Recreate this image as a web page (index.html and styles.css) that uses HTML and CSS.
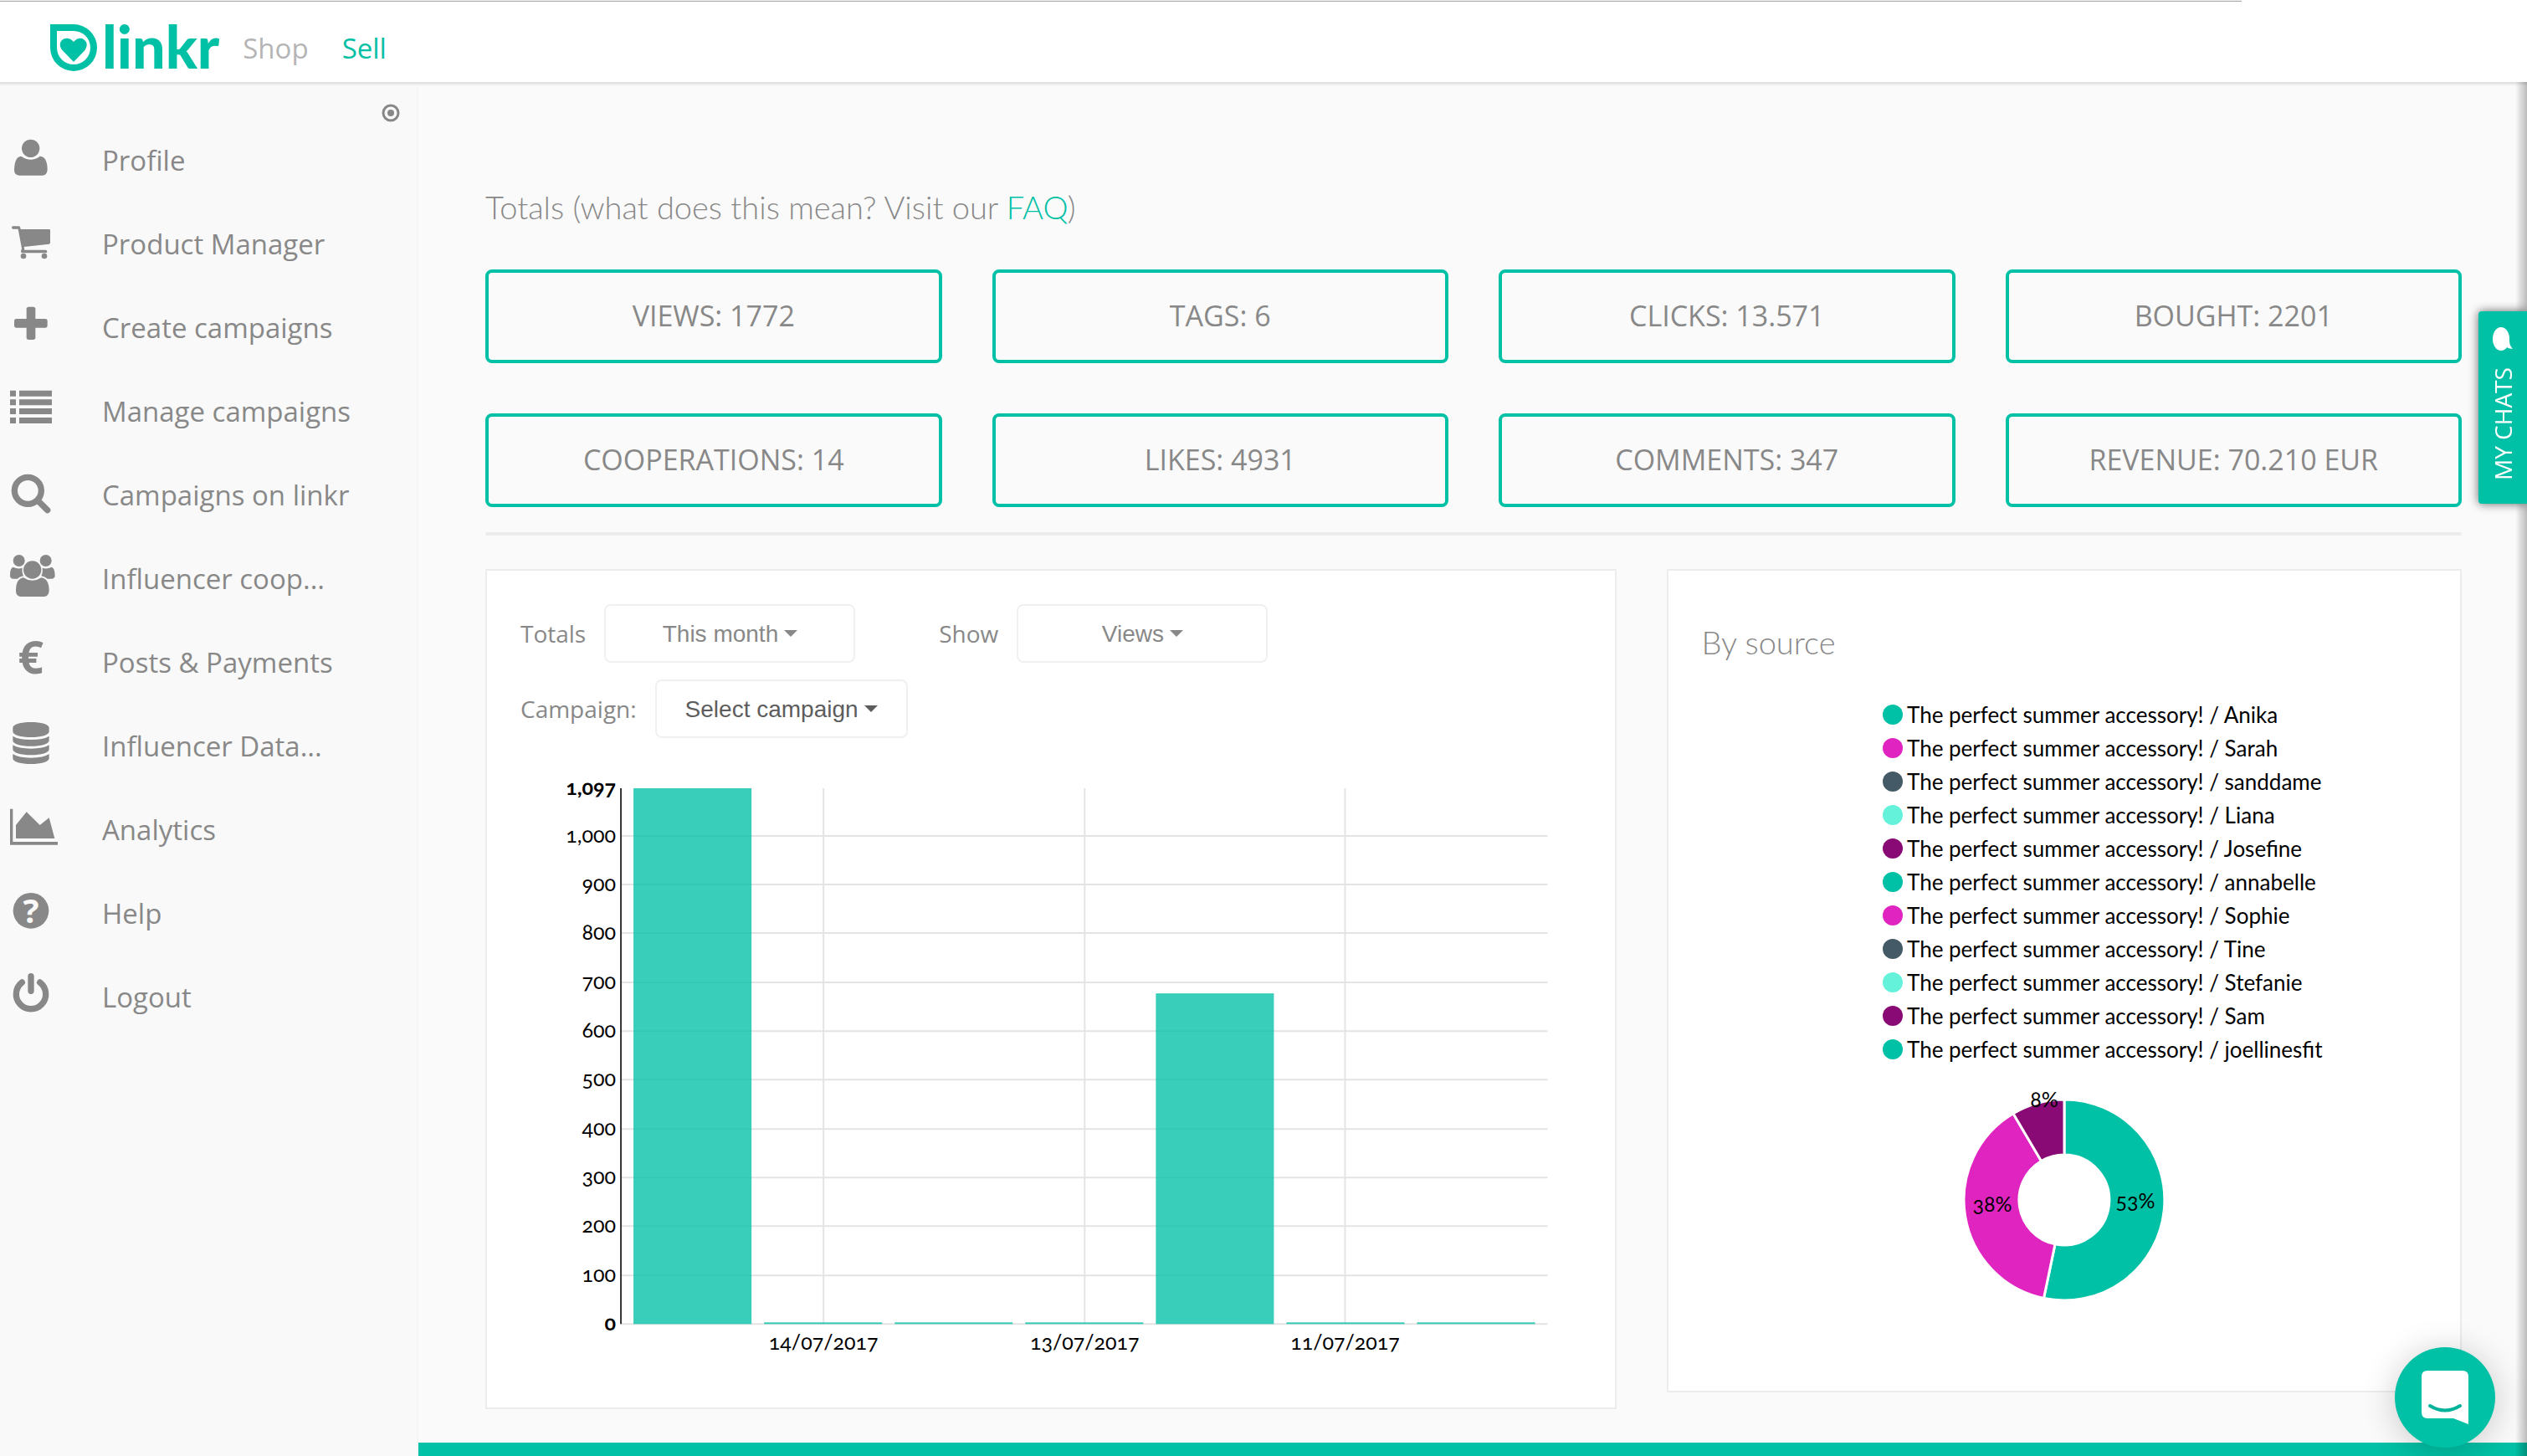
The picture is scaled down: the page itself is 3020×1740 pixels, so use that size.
FILE: index.html
```html
<!DOCTYPE html>
<html lang="en">

<head>
    <meta charset="UTF-8">
    <meta name="viewport" content="width=device-width, initial-scale=1.0">
    <title>linkr - Analytics</title>
    <link rel="stylesheet" href="styles.css">
</head>

<body>
    <div class="loading-bar"></div>

    <header class="header">
        <a class="logo" href="#">
            <svg class="logo-mark" viewBox="0 0 56 56" aria-hidden="true">
                <path fill="#00c0a5" fill-rule="evenodd" d="M0 0H28A28 28 0 1 1 0 28zM8 8V28A20 20 0 1 0 28 8z" />
                <path fill="#00c0a5" d="M28 45L14.500 31C11 27 11 22 14 19C18 15.500 24 16 28 21C32 16 38 15.500 41 19C45 22 44 27 41.500 31z" />
            </svg>
            <span class="logo-text">linkr</span>
        </a>
        <nav class="top-nav">
            <a href="#">Shop</a>
            <a href="#" class="active">Sell</a>
        </nav>
    </header>

    <div class="layout">
        <aside class="sidebar">
            <button class="toggle" type="button" aria-label="Toggle menu">
                <svg viewBox="0 0 22 22" width="22" height="22">
                    <circle cx="11" cy="11" r="9" fill="none" stroke="#888" stroke-width="3" />
                    <circle cx="11" cy="11" r="4" fill="#888" />
                </svg>
            </button>

            <ul class="menu">
                <li><a href="#">
                    <svg viewBox="0 0 180 204"><circle cx="80" cy="58" r="32" /><path d="M46 86Q80 110 114 86Q140 88 140 135Q138 155 122 155H39Q21 154 21 135Q22 88 46 86z" /></svg>
                    <span>Profile</span></a></li>
                <li><a href="#">
                    <svg viewBox="0 0 180 204"><path d="M16 37H38Q42 37 43 42L44 48H146Q150 48 150 52V96Q150 100 146 101L56 111L58 122H135Q139 123 139 128Q139 133 135 133H49Q44 132 45 126L48 117L35 47H16Q12 46 12 42Q12 37 16 37z" /><circle cx="54" cy="144" r="10" /><circle cx="129" cy="144" r="10" /></svg>
                    <span>Product Manager</span></a></li>
                <li><a href="#">
                    <svg viewBox="0 0 180 204"><rect x="65" y="26" width="32" height="118" rx="8" /><rect x="21" y="69" width="119" height="32" rx="8" /></svg>
                    <span>Create campaigns</span></a></li>
                <li><a href="#">
                    <svg viewBox="0 0 180 204"><path d="M6 26h21v21H6zM39 26h117v21H39zM6 58h21v21H6zM39 58h117v21H39zM6 90h21v21H6zM39 90h117v21H39zM6 123h21v21H6zM39 123h117v21H39z" /></svg>
                    <span>Manage campaigns</span></a></li>
                <li><a href="#">
                    <svg viewBox="0 0 180 204"><circle class="line" cx="70" cy="85" r="48" /><path class="line" d="M106 121L140 155" /></svg>
                    <span>Campaigns on linkr</span></a></li>
                <li><a href="#">
                    <svg viewBox="0 0 180 204"><circle cx="38" cy="36" r="21" /><circle cx="134" cy="36" r="21" /><circle cx="86" cy="69" r="32" /><path d="M17 59Q34 68 50 62Q48 80 54 91Q40 93 32 101H18Q6 100 6 89Q6 62 17 59zM155 59Q138 68 122 62Q124 80 118 91Q132 93 140 101H154Q167 100 167 89Q166 62 155 59zM54 97Q86 118 118 97Q146 100 146 145Q144 165 128 165H45Q27 164 27 145Q27 100 54 97z" /></svg>
                    <span>Influencer coop...</span></a></li>
                <li><a href="#">
                    <svg viewBox="0 0 180 204"><text x="80" y="142" font-size="160">€</text></svg>
                    <span>Posts &amp; Payments</span></a></li>
                <li><a href="#">
                    <svg viewBox="0 0 180 204"><path d="M16 36C16 22 45 15 81 15S146 22 146 36V48C146 62 117 69 81 69S16 62 16 48zM16 65Q36 78 81 78T146 65V80C146 94 117 101 81 101S16 94 16 80zM16 97Q36 110 81 110T146 97V112C146 126 117 133 81 133S16 126 16 112zM16 129Q36 143 81 143T146 129V144C146 158 117 165 81 165S16 158 16 144z" /></svg>
                    <span>Influencer Data...</span></a></li>
                <li><a href="#">
                    <svg viewBox="0 0 180 204"><path d="M6 26H16V144H177V155H6zM27 84L65 37L113 84L146 58L166 132H27z" /></svg>
                    <span>Analytics</span></a></li>
                <li><a href="#">
                    <svg viewBox="0 0 180 204"><circle cx="81" cy="91" r="64" /><text class="knockout" x="81" y="134" font-size="120">?</text></svg>
                    <span>Help</span></a></li>
                <li><a href="#">
                    <svg viewBox="0 0 180 204"><path class="line" d="M49 48A53 53 0 1 0 113 48M81 26V79" /></svg>
                    <span>Logout</span></a></li>
            </ul>
        </aside>

        <main class="main">
            <div class="content">
                <h1>Totals (what does this mean? Visit our <a href="#">FAQ</a>)</h1>

                <div class="stats">
                    <div class="stat">VIEWS: 1772</div>
                    <div class="stat">TAGS: 6</div>
                    <div class="stat">CLICKS: 13.571</div>
                    <div class="stat">BOUGHT: 2201</div>
                    <div class="stat">COOPERATIONS: 14</div>
                    <div class="stat">LIKES: 4931</div>
                    <div class="stat">COMMENTS: 347</div>
                    <div class="stat">REVENUE: 70.210 EUR</div>
                </div>

                <hr>

                <div class="panels">
                    <section class="panel chart-panel">
                        <div class="filters">
                            <div class="filter">
                                <label for="period">Totals</label>
                                <div class="select">
                                    <select id="period"><option>This month</option></select>
                                </div>
                            </div>
                            <div class="filter">
                                <label for="metric">Show</label>
                                <div class="select">
                                    <select id="metric"><option>Views</option></select>
                                </div>
                            </div>
                        </div>
                        <div class="filters">
                            <div class="filter">
                                <label for="campaign">Campaign:</label>
                                <div class="select select-campaign">
                                    <select id="campaign"><option>Select campaign</option></select>
                                </div>
                            </div>
                        </div>

                        <svg class="bar-chart" viewBox="0 0 1267 740" role="img" aria-label="Views per day">
                            <!-- grid -->
                            <path class="grid" d="M120 97H1227M120 155H1227M120 213H1227M120 272H1227M120 330H1227M120 388H1227M120 447H1227M120 505H1227M120 563H1227M120 622H1227M120 680H1227M362 40V680M674 40V680M985 40V680" />
                            <!-- bars -->
                            <g class="bars">
                                <rect x="135" y="40" width="141" height="640" />
                                <rect x="291" y="678" width="141" height="2" />
                                <rect x="447" y="678" width="141" height="2" />
                                <rect x="603" y="678" width="141" height="2" />
                                <rect x="759" y="285" width="141" height="395" />
                                <rect x="915" y="678" width="141" height="2" />
                                <rect x="1071" y="678" width="141" height="2" />
                            </g>
                            <path class="axis" d="M120 40V680" />
                            <g class="y-labels">
                                <text class="bold" x="114" y="48">1,097</text>
                                <text x="114" y="105">1,000</text>
                                <text x="114" y="163">900</text>
                                <text x="114" y="221">800</text>
                                <text x="114" y="280">700</text>
                                <text x="114" y="338">600</text>
                                <text x="114" y="396">500</text>
                                <text x="114" y="455">400</text>
                                <text x="114" y="513">300</text>
                                <text x="114" y="571">200</text>
                                <text x="114" y="630">100</text>
                                <text class="bold" x="114" y="688">0</text>
                            </g>
                            <g class="x-labels">
                                <text x="362" y="711">14/07/2017</text>
                                <text x="674" y="711">13/07/2017</text>
                                <text x="985" y="711">11/07/2017</text>
                            </g>
                        </svg>
                    </section>

                    <section class="panel source-panel">
                        <h2>By source</h2>
                        <ul class="legend">
                            <li class="teal">The perfect summer accessory! / Anika</li>
                            <li class="pink">The perfect summer accessory! / Sarah</li>
                            <li class="slate">The perfect summer accessory! / sanddame</li>
                            <li class="mint">The perfect summer accessory! / Liana</li>
                            <li class="purple">The perfect summer accessory! / Josefine</li>
                            <li class="teal">The perfect summer accessory! / annabelle</li>
                            <li class="pink">The perfect summer accessory! / Sophie</li>
                            <li class="slate">The perfect summer accessory! / Tine</li>
                            <li class="mint">The perfect summer accessory! / Stefanie</li>
                            <li class="purple">The perfect summer accessory! / Sam</li>
                            <li class="teal">The perfect summer accessory! / joellinesfit</li>
                        </ul>
                        <svg class="donut" viewBox="0 0 260 260" width="260" height="260" role="img" aria-label="Views by source">
                            <g stroke="#fff" stroke-width="3">
                                <path fill="#00c0a5" d="M130 10A120 120 0 1 1 105.500 247.500L119 182.900A54 54 0 1 0 130 76z" />
                                <path fill="#e024c0" d="M105.500 247.500A120 120 0 0 1 69 26.700L102.500 83.500A54 54 0 0 0 119 182.900z" />
                                <path fill="#890a74" d="M69 26.700A120 120 0 0 1 130 10V76A54 54 0 0 0 102.500 83.500z" />
                            </g>
                            <text x="215" y="140">53%</text>
                            <text x="44" y="144">38%</text>
                            <text x="106" y="19">8%</text>
                        </svg>
                    </section>
                </div>
            </div>
            <footer class="footer"></footer>
        </main>
    </div>

    <div class="drawer-edge"></div>
    <button class="chats" type="button">
        MY CHATS
        <svg viewBox="0 0 24 28" width="24" height="28" aria-hidden="true">
            <ellipse cx="14" cy="14" rx="10" ry="14" fill="#fff" />
            <path fill="#fff" d="M4 12Q4 6 0 2Q5 2 9 5z" />
        </svg>
    </button>

    <button class="messenger" type="button" aria-label="Open messenger">
        <svg viewBox="0 0 56 64" width="56" height="64">
            <path fill="#fff" d="M7 0H49Q56 0 56 7V64L38 57H7Q0 57 0 50V7Q0 0 7 0z" />
            <path fill="none" stroke="#00b39a" stroke-width="4" stroke-linecap="round" d="M10 42Q28 53 46 42" />
        </svg>
    </button>
</body>

</html>
```
FILE: styles.css
```css
* {
    box-sizing: border-box;
}

body {
    margin: 0;
    font-family: "Open Sans", sans-serif;
    color: #888;
    background-color: #fafafa;
}

a {
    color: #00c0a5;
    text-decoration: none;
}

button,
select {
    font-family: inherit;
    border: none;
    cursor: pointer;
}

ul {
    list-style: none;
    margin: 0;
    padding: 0;
}

/* header */
.loading-bar {
    position: absolute;
    top: 0;
    left: 0;
    width: 2679px;
    max-width: 100%;
    height: 2px;
    background-color: #f0f0f0;
    border-bottom: 1px solid #aaa;
}

.header {
    display: flex;
    align-items: center;
    height: 102px;
    padding: 14px 60px 0;
    background-color: #fff;
    border-bottom: 2px solid #eee;
    box-shadow: inset 0 -2px 0 #e1e1e1;
}

.logo {
    display: flex;
    align-items: center;
    gap: 6px;
}

.logo-mark {
    width: 56px;
    height: 56px;
}

.logo-text {
    font-family: "Lato", sans-serif;
    font-weight: 900;
    font-size: 70px;
    line-height: 52px;
    padding-bottom: 4px;
}

.top-nav {
    display: flex;
    gap: 40px;
    margin-left: 28px;
    font-size: 33px;
}

.top-nav a {
    color: #b5b5b5;
}

.top-nav .active {
    color: #00c0a5;
}

/* layout */
.layout {
    display: grid;
    grid-template-columns: 500px 1fr;
    min-height: calc(100vh - 102px);
}

.sidebar {
    background-color: #f9f9f9;
    border-right: 2px solid #f5f5f5;
}

.toggle {
    display: flex;
    align-items: center;
    height: 66px;
    margin: 0 10px -26px auto;
    padding: 0 10px;
    background: none;
}

.menu a {
    display: flex;
    align-items: center;
    gap: 52px;
    height: 100px;
    padding-left: 10px;
    font-size: 33px;
    color: #888;
}

.menu svg {
    width: 60px;
    height: 68px;
    overflow: visible;
    fill: #888;
}

.menu span {
    padding-bottom: 2px;
}

.menu .line {
    fill: none;
    stroke: #888;
    stroke-width: 22;
    stroke-linecap: round;
}

.menu text {
    font-weight: 700;
    text-anchor: middle;
}

.menu .knockout {
    fill: #f9f9f9;
}

.main {
    display: flex;
    flex-direction: column;
}

.content {
    flex: 1;
    padding: 120px 78px 40px 80px;
}

h1,
h2 {
    margin: 0;
    font-family: "Lato", sans-serif;
    font-weight: 300;
    font-size: 38px;
    line-height: 50px;
}

.stats {
    display: grid;
    grid-template-columns: repeat(4, 1fr);
    gap: 60px;
    margin-top: 50px;
}

.stat {
    height: 112px;
    border: 4px solid #00c0a5;
    border-radius: 8px;
    font-size: 34px;
    line-height: 102px;
    text-align: center;
}

hr {
    height: 4px;
    margin: 30px 0 40px;
    border: none;
    border-radius: 2px;
    background-color: #ececec;
}

.panels {
    display: grid;
    grid-template-columns: 1351fr 950fr;
    align-items: start;
    gap: 60px;
}

.panel {
    background-color: #fff;
    border: 2px solid #ececec;
    padding: 40px;
}

/* filters */
.filters {
    display: flex;
    gap: 100px;
    margin-bottom: 20px;
    font-size: 28px;
}

.filter {
    display: flex;
    align-items: center;
    gap: 22px;
}

.select {
    display: flex;
    align-items: center;
    justify-content: center;
    gap: 6px;
    width: 300px;
    height: 70px;
    border: 2px solid #f0f0f0;
    border-radius: 8px;
}

.select::after {
    content: "";
    border: 8px solid transparent;
    border-top-color: #888;
    border-bottom: none;
}

.select select {
    appearance: none;
    padding: 0;
    background: none;
    font-family: "Liberation Sans", Arial, sans-serif;
    font-size: 28px;
    color: #888;
}

.select-campaign {
    width: auto;
    padding: 0 34px;
}

.select-campaign select {
    color: #5d5d5d;
}

.select-campaign::after {
    border-top-color: #5d5d5d;
}

/* charts */
.bar-chart {
    display: block;
    width: 100%;
}

.bar-chart text,
.donut text {
    font-family: "Lato", sans-serif;
    font-size: 25px;
    font-variant-numeric: oldstyle-nums;
    fill: #000;
}

.grid,
.axis {
    fill: none;
    stroke: #e4e4e4;
    stroke-width: 2;
}

.axis {
    stroke: #333;
}

.bars {
    fill: #00c0a5;
    fill-opacity: 0.78;
}

.y-labels {
    text-anchor: end;
}

.y-labels .bold {
    font-weight: 700;
}

.x-labels,
.donut text {
    text-anchor: middle;
}

.source-panel {
    padding: 60px 40px 98px;
}

.legend {
    width: 568px;
    margin: 42px 82px 0 auto;
}

.legend li {
    display: flex;
    align-items: center;
    gap: 5px;
    height: 40px;
    font-family: "Lato", sans-serif;
    font-size: 26px;
    color: #000;
    white-space: nowrap;
}

.legend li::before {
    content: "";
    width: 24px;
    height: 24px;
    border-radius: 50%;
}

.legend .teal::before {
    background-color: #00c0a5;
}

.legend .pink::before {
    background-color: #e024c0;
}

.legend .slate::before {
    background-color: #455a67;
}

.legend .mint::before {
    background-color: #64f2da;
}

.legend .purple::before {
    background-color: #890a74;
}

.donut {
    display: block;
    margin: 30px auto 0;
    overflow: visible;
}

.footer {
    height: 16px;
    background-color: #00c0a5;
}

/* floating */
.drawer-edge {
    position: fixed;
    top: 98px;
    right: 0;
    bottom: 0;
    width: 14px;
    background: linear-gradient(to right, rgba(0, 0, 0, 0), rgba(0, 0, 0, 0.25));
}

.chats {
    position: fixed;
    top: 372px;
    right: 0;
    display: flex;
    align-items: center;
    gap: 20px;
    width: 58px;
    height: 230px;
    padding: 28px 0;
    writing-mode: vertical-rl;
    rotate: 180deg;
    white-space: nowrap;
    background-color: #00c0a5;
    border-radius: 0 4px 4px 0;
    box-shadow: 0 0 12px rgba(0, 0, 0, 0.6);
    font-size: 28px;
    color: #fff;
}

.chats svg {
    flex-shrink: 0;
}

.messenger {
    position: fixed;
    right: 38px;
    bottom: 10px;
    display: flex;
    align-items: center;
    justify-content: center;
    width: 120px;
    height: 120px;
    padding: 0;
    border-radius: 50%;
    background-color: #00c0a5;
    box-shadow: 0 4px 40px rgba(0, 0, 0, 0.2);
}
```
